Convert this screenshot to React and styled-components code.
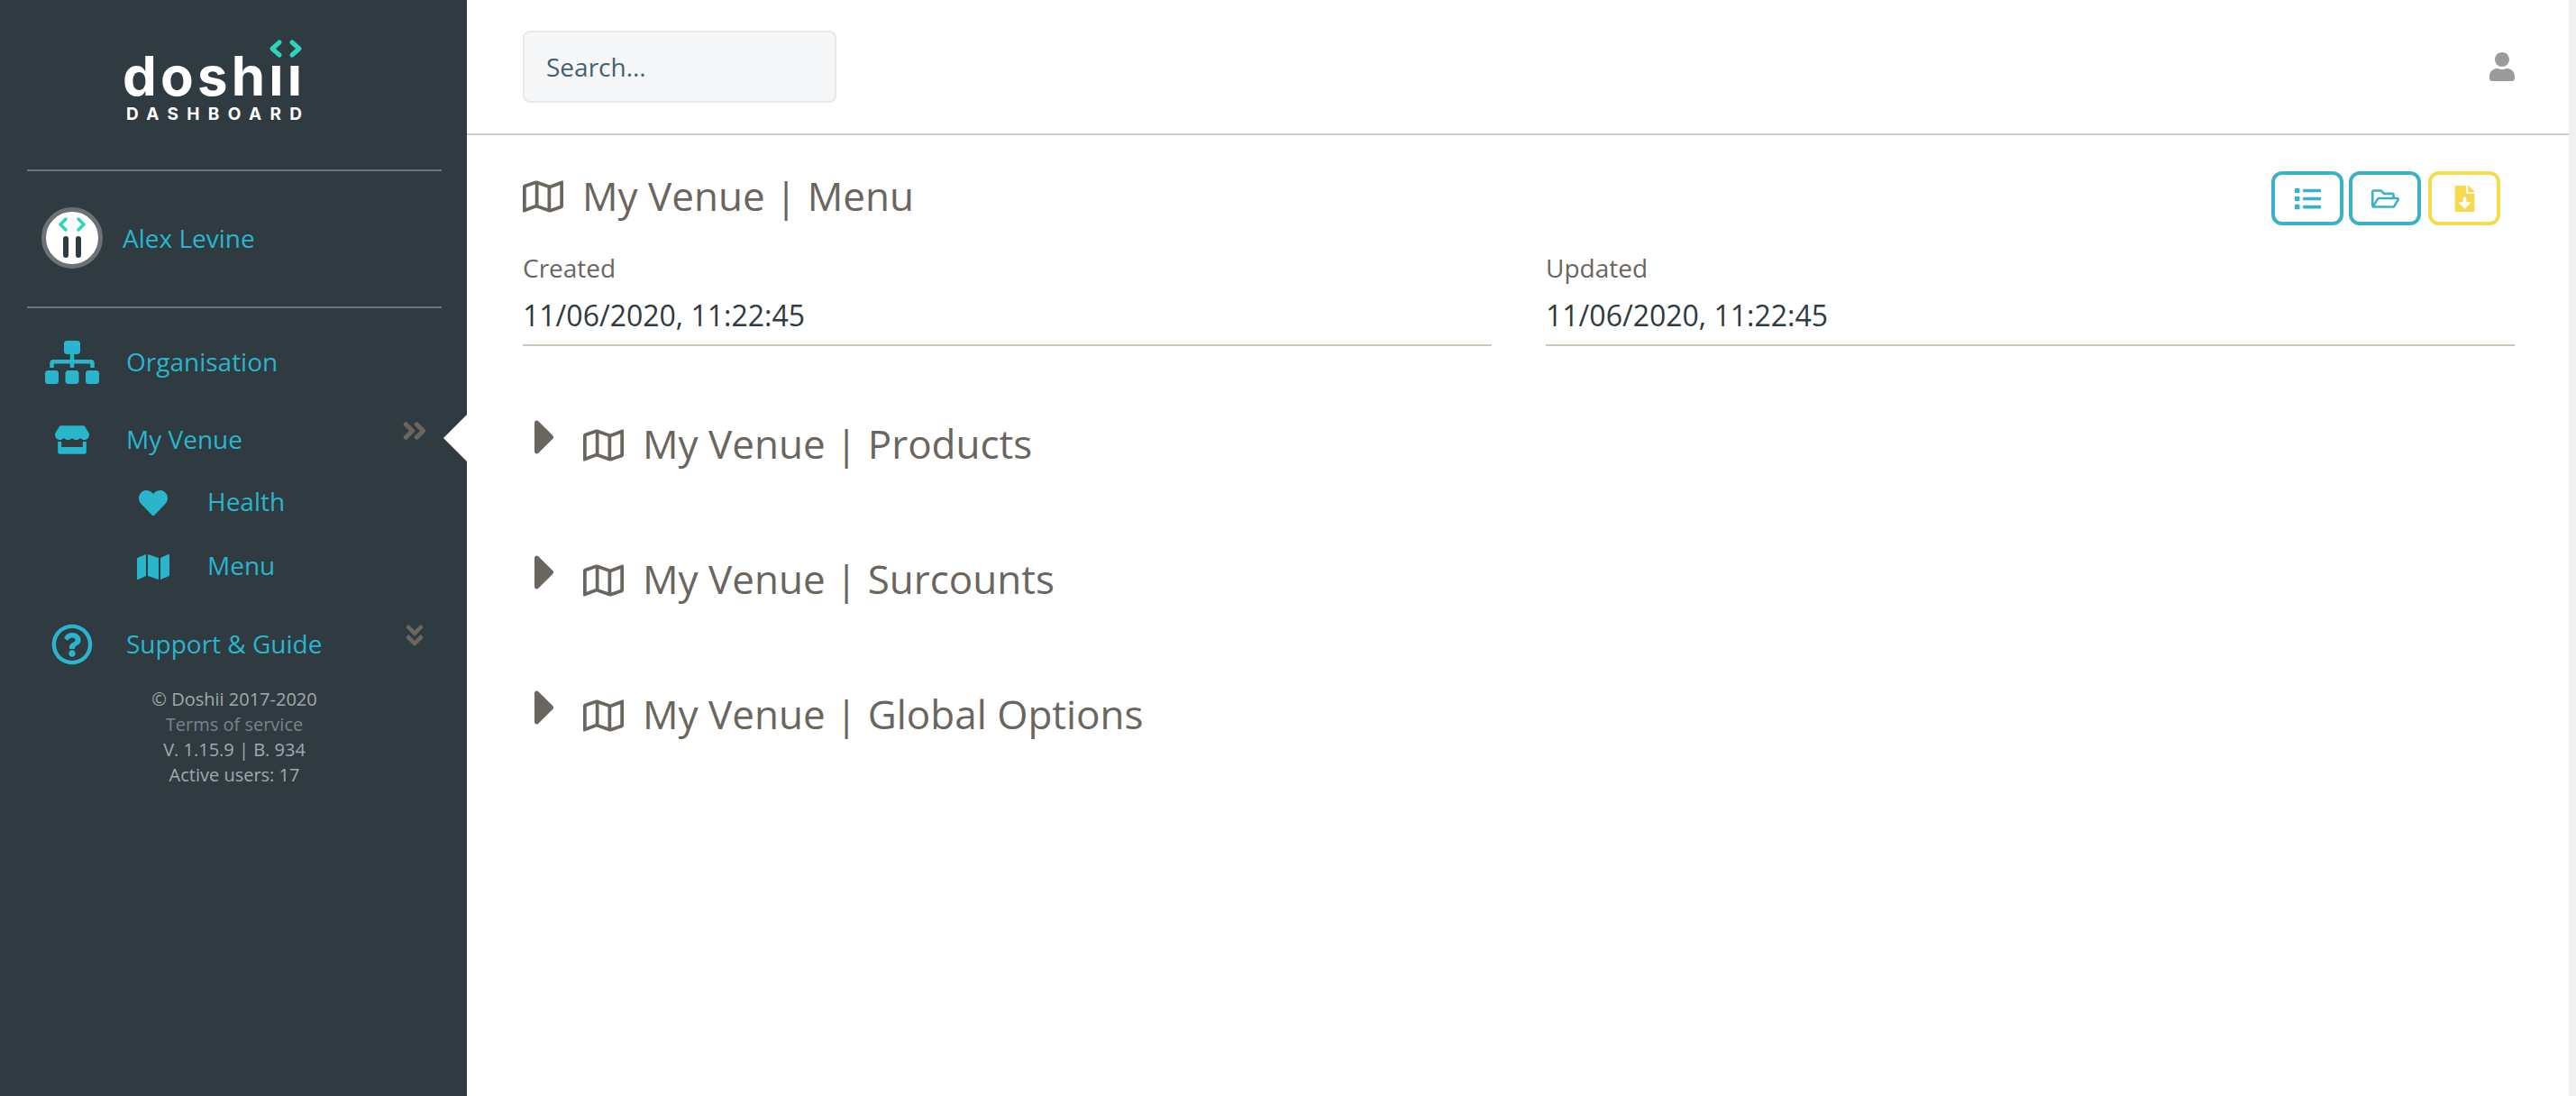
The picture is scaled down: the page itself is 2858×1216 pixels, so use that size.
import React from 'react';
import styled, { createGlobalStyle } from 'styled-components';
import {
  FaSitemap,
  FaStore,
  FaHeart,
  FaMap,
  FaRegMap,
  FaRegQuestionCircle,
  FaAngleDoubleRight,
  FaAngleDoubleDown,
  FaUser,
  FaList,
  FaRegFolderOpen,
  FaFileDownload,
  FaCaretRight,
} from 'react-icons/fa';

const colors = {
  slate: '#2f3a41',
  teal: '#29b6cc',
  mint: '#2dd4bd',
  brown: '#6b6560',
  rule: '#cfcec6',
  yellow: '#f5d94e',
};

const GlobalStyle = createGlobalStyle`
  html, body {
    margin: 0;
    padding: 0;
    background: #fff;
    font-family: "Open Sans", "Liberation Sans", sans-serif;
  }
  * { box-sizing: border-box; }
`;

const Page = styled.div`
  display: flex;
  width: 2858px;
  height: 1216px;
  overflow: hidden;
`;

const Sidebar = styled.aside`
  position: relative;
  flex: 0 0 518px;
  background: ${colors.slate};
`;

const LogoWrap = styled.div`
  height: 188px;
  padding: 40px 0 0 130px;
`;

const Divider = styled.div`
  height: 2px;
  margin: 0 28px 0 30px;
  background: #6c757d;
`;

const UserRow = styled.div`
  display: flex;
  align-items: center;
  gap: 22px;
  height: 150px;
  padding: 0 0 2px 46px;
`;

const Avatar = styled.div`
  display: flex;
  width: 68px;
  height: 68px;
  border: 5px solid #6c7178;
  border-radius: 50%;
  background: #fff;
  overflow: hidden;
`;

const UserName = styled.span`
  font-size: 28px;
  font-weight: 400;
  color: ${colors.teal};
`;

const Nav = styled.nav`
  padding-top: 26px;
`;

const NavRow = styled.div`
  display: flex;
  align-items: center;
  height: ${p => (p.$sub ? '71px' : '68px')};
  margin-top: ${p => p.$gap || 0}px;
  padding: 0 45px 0 ${p => (p.$sub ? 140 : 50)}px;
  font-size: 28px;
  font-weight: 400;
  color: ${colors.teal};
`;

const NavIcon = styled.span`
  display: flex;
  align-items: center;
  justify-content: center;
  flex: 0 0 60px;
  margin-right: 30px;
  font-size: ${p => p.$size}px;
`;

const NavLabel = styled.span`
  margin-top: -3px;
`;

const NavArrow = styled.span`
  display: flex;
  align-items: center;
  align-self: flex-start;
  justify-content: center;
  width: 32px;
  height: 48px;
  margin-left: auto;
  font-size: ${p => p.$size}px;
  color: ${colors.brown};
  transform: translateX(3px);
`;

const Notch = styled.div`
  position: absolute;
  top: 460px;
  right: 0;
  width: 0;
  height: 0;
  border-top: 26px solid transparent;
  border-bottom: 26px solid transparent;
  border-right: 26px solid #fff;
`;

const Footer = styled.div`
  margin-top: 13px;
  padding-left: 2px;
  text-align: center;
  font-size: 20px;
  line-height: 28px;
  color: #a2a9ae;
`;

const FooterLink = styled.div`
  color: #79838a;
`;

const Main = styled.main`
  flex: 1;
  min-width: 0;
  background: #fff;
`;

const ScrollTrack = styled.div`
  flex: 0 0 8px;
  background: #f0f0f0;
`;

const TopBar = styled.header`
  display: flex;
  align-items: center;
  justify-content: space-between;
  height: 150px;
  padding: 0 60px 0 62px;
  border-bottom: 2px solid ${colors.rule};
`;

const SearchBox = styled.input`
  width: 348px;
  height: 80px;
  padding: 0 24px;
  border: 2px solid #e8e8e4;
  border-radius: 8px;
  background: #f6f7f9;
  font-family: inherit;
  font-size: 28px;
  color: #456070;
  &::placeholder {
    color: #456070;
    opacity: 1;
  }
`;

const UserIcon = styled(FaUser)`
  font-size: 32px;
  width: 28px;
  color: #9b9b9b;
`;

const Content = styled.section`
  padding: 40px 60px 0 62px;
`;

const TitleRow = styled.div`
  display: flex;
  align-items: center;
  justify-content: space-between;
  height: 60px;
  padding-right: 16px;
`;

const Title = styled.h1`
  display: flex;
  align-items: center;
  margin: -7px 0 0;
  font-size: 44px;
  font-weight: 400;
  color: ${colors.brown};
`;

const MapIcon = styled(FaRegMap)`
  flex: none;
  width: 45px;
  height: 40px;
  margin-top: ${p => p.$top || 0}px;
  margin-right: ${p => p.$gap}px;
`;

const Actions = styled.div`
  display: flex;
  gap: 6px;
`;

const ActionButton = styled.button`
  display: flex;
  align-items: center;
  justify-content: center;
  width: 80px;
  height: 60px;
  margin-left: ${p => (p.$warn ? 2 : 0)}px;
  padding: 0;
  border: 4px solid ${p => (p.$warn ? colors.yellow : '#3ab1c8')};
  border-radius: 12px;
  background: #fff;
  font-size: ${p => p.$size}px;
  color: ${p => (p.$warn ? colors.yellow : '#3ab1c8')};
`;

const MetaGrid = styled.div`
  display: grid;
  grid-template-columns: 1fr 1fr;
  column-gap: 60px;
  margin-top: 27px;
`;

const MetaLabel = styled.div`
  height: 41px;
  font-size: 28px;
  font-weight: 500;
  line-height: 40px;
  color: ${colors.brown};
`;

const MetaValue = styled.div`
  height: 66px;
  padding-top: 12px;
  border-bottom: 2px solid #c9c9b9;
  font-size: 32px;
  line-height: 40px;
  color: ${colors.slate};
`;

const Sections = styled.div`
  margin-top: 35px;
`;

const SectionRow = styled.div`
  display: flex;
  align-items: center;
  height: 150px;
  padding-left: 13px;
  font-size: 44px;
  color: ${colors.brown};
`;

const Caret = styled(FaCaretRight)`
  flex: none;
  width: 24px;
  height: 64px;
  margin: -18px 30px 0 0;
`;

const SectionLabel = styled.span`
  margin-top: -4px;
`;

const Logo = () => (
  <svg width="210" height="100" viewBox="0 0 210 100">
    <defs>
      <clipPath id="wordmark-clip">
        <path d="M0 0H165V100H0Z M165 31H210V100H165Z" />
      </clipPath>
    </defs>
    <text
      x="6"
      y="66"
      clipPath="url(#wordmark-clip)"
      fontFamily="Inter, Lato, sans-serif"
      fontWeight="700"
      fontSize="60"
      fill="#fff"
      textLength="199"
    >
      doshii
    </text>
    <text
      x="10"
      y="93"
      fontFamily="Inter, Lato, sans-serif"
      fontWeight="700"
      fontSize="19"
      fill="#fff"
      textLength="195"
    >
      DASHBOARD
    </text>
    <path
      d="M180 7l-8 7 8 7M194 7l8 7-8 7"
      fill="none"
      stroke={colors.mint}
      strokeWidth="5"
      strokeLinecap="round"
      strokeLinejoin="round"
    />
  </svg>
);

const AvatarMark = () => (
  <svg width="58" height="58" viewBox="0 0 58 58">
    <path
      d="M22 8l-6 6 6 6M36 8l6 6-6 6"
      fill="none"
      stroke={colors.mint}
      strokeWidth="3.5"
      strokeLinecap="round"
      strokeLinejoin="round"
    />
    <rect x="19" y="27" width="6" height="24" rx="3" fill={colors.slate} />
    <rect x="33" y="27" width="6" height="24" rx="3" fill={colors.slate} />
  </svg>
);

const sections = ['Products', 'Surcounts', 'Global Options'];

const App = () => (
  <Page>
    <GlobalStyle />
    <Sidebar>
      <LogoWrap>
        <Logo />
      </LogoWrap>
      <Divider />
      <UserRow>
        <Avatar>
          <AvatarMark />
        </Avatar>
        <UserName>Alex Levine</UserName>
      </UserRow>
      <Divider />
      <Nav>
        <NavRow>
          <NavIcon $size={60}>
            <FaSitemap />
          </NavIcon>
          <NavLabel>Organisation</NavLabel>
        </NavRow>
        <NavRow $gap={18}>
          <NavIcon $size={38}>
            <FaStore />
          </NavIcon>
          <NavLabel>My Venue</NavLabel>
          <NavArrow $size={32}>
            <FaAngleDoubleRight />
          </NavArrow>
        </NavRow>
        <NavRow $sub>
          <NavIcon $size={32}>
            <FaHeart />
          </NavIcon>
          <NavLabel>Health</NavLabel>
        </NavRow>
        <NavRow $sub>
          <NavIcon $size={36}>
            <FaMap />
          </NavIcon>
          <NavLabel>Menu</NavLabel>
        </NavRow>
        <NavRow $gap={17}>
          <NavIcon $size={46}>
            <FaRegQuestionCircle />
          </NavIcon>
          <NavLabel>Support &amp; Guide</NavLabel>
          <NavArrow $size={30}>
            <FaAngleDoubleDown />
          </NavArrow>
        </NavRow>
      </Nav>
      <Footer>
        <div>© Doshii 2017-2020</div>
        <FooterLink>Terms of service</FooterLink>
        <div>V. 1.15.9 | B. 934</div>
        <div>Active users: 17</div>
      </Footer>
      <Notch />
    </Sidebar>
    <Main>
      <TopBar>
        <SearchBox placeholder="Search..." />
        <UserIcon />
      </TopBar>
      <Content>
        <TitleRow>
          <Title>
            <MapIcon $gap={21} $top={3} />
            My Venue | Menu
          </Title>
          <Actions>
            <ActionButton $size={29}>
              <FaList />
            </ActionButton>
            <ActionButton $size={31}>
              <FaRegFolderOpen />
            </ActionButton>
            <ActionButton $warn $size={29}>
              <FaFileDownload />
            </ActionButton>
          </Actions>
        </TitleRow>
        <MetaGrid>
          <div>
            <MetaLabel>Created</MetaLabel>
            <MetaValue>11/06/2020, 11:22:45</MetaValue>
          </div>
          <div>
            <MetaLabel>Updated</MetaLabel>
            <MetaValue>11/06/2020, 11:22:45</MetaValue>
          </div>
        </MetaGrid>
        <Sections>
          {sections.map(name => (
            <SectionRow key={name}>
              <Caret />
              <MapIcon $gap={21} />
              <SectionLabel>My Venue | {name}</SectionLabel>
            </SectionRow>
          ))}
        </Sections>
      </Content>
    </Main>
    <ScrollTrack />
  </Page>
);

export default App;
